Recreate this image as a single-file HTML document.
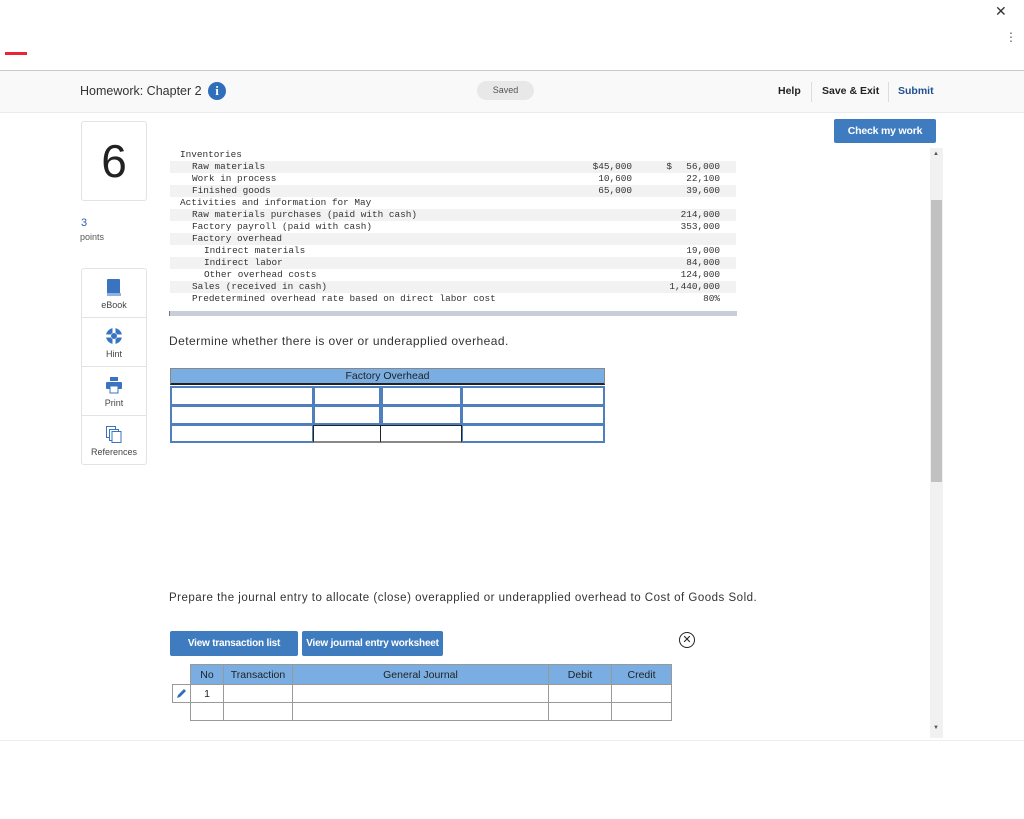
<!DOCTYPE html>
<html><head><style>
body{margin:0;width:1024px;height:819px;background:#fff;position:relative;overflow:hidden;font-family:"Liberation Sans",sans-serif;color:#333}
.a{position:absolute}
.mono{font-family:"Liberation Mono",monospace;font-size:9.4px;color:#333}
.r{position:absolute;left:170px;width:566px;height:12px;line-height:12px}
.s{background:#f2f2f2}
.n{position:absolute;text-align:right}
.side{position:absolute;left:81px;width:64px;border:1px solid #e3e3e3;border-radius:3px;background:#fff}
.si{height:48px;border-bottom:1px solid #e3e3e3;text-align:center;font-size:9px;color:#444;position:relative}
.si:last-child{border-bottom:none}
.si svg{position:absolute;left:23px;top:9px}
.si span{position:absolute;left:0;right:0;top:31px}
.btn{position:absolute;background:#3f7cbf;color:#fff;font-weight:bold;font-size:10px;text-align:center;border-radius:2px;letter-spacing:-0.2px}
table{border-collapse:collapse;table-layout:fixed}
td,th{border:1px solid #999;padding:0;font-weight:normal}
</style></head><body>
<div class="a" style="left:0;top:70px;width:1024px;height:1px;background:#c8c8c8"></div>
<div class="a" style="left:995px;top:3px;font-size:14px;color:#333">✕</div>
<div class="a" style="left:1005px;top:30px;font-size:12px;color:#555">⋮</div>
<div class="a" style="left:5px;top:52px;width:22px;height:3px;background:#e23"></div>
<div class="a" style="left:0;top:71px;width:1024px;height:41px;background:#f9f9f9;border-bottom:1px solid #ececec"></div>
<div class="a" style="left:80px;top:84px;font-size:12.5px;color:#333">Homework: Chapter 2</div>
<div class="a" style="left:208px;top:82px;width:18px;height:18px;border-radius:50%;background:#2f6fba;color:#fff;font-weight:bold;font-size:13px;text-align:center;line-height:18px;font-family:'Liberation Serif',serif">i</div>
<div class="a" style="left:477px;top:81px;width:57px;height:19px;border-radius:10px;background:#e8e8e8;font-size:9px;text-align:center;line-height:19px;color:#555">Saved</div>
<div class="a" style="left:778px;top:85px;font-size:10.5px;font-weight:bold;color:#222">Help</div>
<div class="a" style="left:811px;top:82px;width:1px;height:20px;background:#ddd"></div>
<div class="a" style="left:822px;top:85px;font-size:10.5px;font-weight:bold;color:#222">Save &amp; Exit</div>
<div class="a" style="left:888px;top:82px;width:1px;height:20px;background:#ddd"></div>
<div class="a" style="left:898px;top:85px;font-size:10.5px;font-weight:bold;color:#1f4f8f">Submit</div>
<div class="btn" style="left:834px;top:119px;width:102px;height:24px;line-height:24px;font-size:10.5px">Check my work</div>
<div class="a" style="left:930px;top:148px;width:13px;height:590px;background:#f1f1f1"></div>
<div class="a" style="left:931px;top:200px;width:11px;height:282px;background:#c1c1c1"></div>
<div class="a" style="left:933px;top:151px;font-size:6px;color:#555">▲</div>
<div class="a" style="left:933px;top:725px;font-size:6px;color:#555">▼</div>
<div class="a" style="left:81px;top:121px;width:64px;height:78px;border:1px solid #e3e3e3;border-radius:3px;text-align:center;font-size:46px;line-height:78px;color:#222">6</div>
<div class="a" style="left:81px;top:217px;font-size:11px;color:#2f5f9f">3</div>
<div class="a" style="left:80px;top:232px;font-size:9px;color:#555">points</div>
<div class="side" style="top:268px">
<div class="si"><svg width="17" height="19"><rect x="2" y="1" width="13" height="16" rx="1" fill="#3a74c0"/><rect x="2" y="15" width="14" height="3" fill="#8fb3e0"/></svg><span>eBook</span></div>
<div class="si"><svg width="18" height="18"><circle cx="9" cy="9" r="8" fill="#3a74c0"/><circle cx="9" cy="9" r="3.5" fill="#fff"/><rect x="7.5" y="1" width="3" height="16" fill="#fff"/><rect x="1" y="7.5" width="16" height="3" fill="#fff"/><circle cx="9" cy="9" r="3" fill="#3a74c0"/></svg><span>Hint</span></div>
<div class="si"><svg width="18" height="18"><rect x="5" y="1" width="8" height="4" fill="#3a74c0"/><rect x="1" y="6" width="16" height="7" rx="1" fill="#3a74c0"/><rect x="5" y="10" width="8" height="7" fill="#fff" stroke="#3a74c0"/></svg><span>Print</span></div>
<div class="si"><svg width="18" height="18"><rect x="1.5" y="1.5" width="9" height="11" fill="#fff" stroke="#3a74c0"/><rect x="4.5" y="4.5" width="9" height="11" fill="#fff" stroke="#3a74c0"/><rect x="7" y="6.5" width="9" height="11" fill="#fff" stroke="#3a74c0"/></svg><span>References</span></div>
</div>
<div class="mono">
<div class="r" style="top:149px"><span style="margin-left:10px">Inventories</span></div>
<div class="r s" style="top:161px"><span style="margin-left:22px">Raw materials</span><span class="n" style="right:104px">$45,000</span><span class="n" style="right:64px">$</span><span class="n" style="right:16px">56,000</span></div>
<div class="r" style="top:173px"><span style="margin-left:22px">Work in process</span><span class="n" style="right:104px">10,600</span><span class="n" style="right:16px">22,100</span></div>
<div class="r s" style="top:185px"><span style="margin-left:22px">Finished goods</span><span class="n" style="right:104px">65,000</span><span class="n" style="right:16px">39,600</span></div>
<div class="r" style="top:197px"><span style="margin-left:10px">Activities and information for May</span></div>
<div class="r s" style="top:209px"><span style="margin-left:22px">Raw materials purchases (paid with cash)</span><span class="n" style="right:16px">214,000</span></div>
<div class="r" style="top:221px"><span style="margin-left:22px">Factory payroll (paid with cash)</span><span class="n" style="right:16px">353,000</span></div>
<div class="r s" style="top:233px"><span style="margin-left:22px">Factory overhead</span></div>
<div class="r" style="top:245px"><span style="margin-left:34px">Indirect materials</span><span class="n" style="right:16px">19,000</span></div>
<div class="r s" style="top:257px"><span style="margin-left:34px">Indirect labor</span><span class="n" style="right:16px">84,000</span></div>
<div class="r" style="top:269px"><span style="margin-left:34px">Other overhead costs</span><span class="n" style="right:16px">124,000</span></div>
<div class="r s" style="top:281px"><span style="margin-left:22px">Sales (received in cash)</span><span class="n" style="right:16px">1,440,000</span></div>
<div class="r" style="top:293px"><span style="margin-left:22px">Predetermined overhead rate based on direct labor cost</span><span class="n" style="right:16px">80%</span></div>
</div>
<div class="a" style="left:169px;top:311px;width:567px;height:5px;background:#c9cdd8;border-left:1px solid #777"></div>
<div class="a" style="left:169px;top:334px;font-size:12px;letter-spacing:0.45px;color:#333">Determine whether there is over or underapplied overhead.</div>
<div class="a" style="left:170px;top:368px;width:435px;height:17px;background:#7aaee3;border:1px solid #888;border-bottom:2px solid #222;box-sizing:border-box;text-align:center;font-size:10.5px;line-height:15px;color:#222">Factory Overhead</div>
<div class="a" style="left:170px;top:386px;width:435px;height:57px;background:#4f7fbf"></div>
<div class="a" style="left:172px;top:388px;width:140px;height:16px;background:#fff"></div>
<div class="a" style="left:315px;top:388px;width:64px;height:16px;background:#fff"></div>
<div class="a" style="left:383px;top:388px;width:77px;height:16px;background:#fff"></div>
<div class="a" style="left:463px;top:388px;width:140px;height:16px;background:#fff"></div>
<div class="a" style="left:172px;top:407px;width:140px;height:16px;background:#fff"></div>
<div class="a" style="left:315px;top:407px;width:64px;height:16px;background:#fff"></div>
<div class="a" style="left:383px;top:407px;width:77px;height:16px;background:#fff"></div>
<div class="a" style="left:463px;top:407px;width:140px;height:16px;background:#fff"></div>
<div class="a" style="left:172px;top:426px;width:140px;height:15px;background:#fff"></div>
<div class="a" style="left:313px;top:425px;width:68px;height:18px;background:#fff;border:1px solid #222;box-sizing:border-box;border-bottom:2px solid #888"></div>
<div class="a" style="left:381px;top:425px;width:81px;height:18px;background:#fff;border:1px solid #222;box-sizing:border-box;border-left:none;border-bottom:2px solid #888"></div>
<div class="a" style="left:463px;top:426px;width:140px;height:15px;background:#fff"></div>
<div class="a" style="left:169px;top:592px;font-size:11.5px;letter-spacing:0.5px;color:#333">Prepare the journal entry to allocate (close) overapplied or underapplied overhead to Cost of Goods Sold.</div>
<div class="btn" style="left:170px;top:631px;width:128px;height:25px;line-height:25px">View transaction list</div>
<div class="btn" style="left:302px;top:631px;width:141px;height:25px;line-height:25px">View journal entry worksheet</div>
<div class="a" style="left:679px;top:632px;width:14px;height:14px;border:1.5px solid #222;border-radius:50%;text-align:center;font-size:11px;line-height:14px;color:#222">✕</div>
<table class="a" style="left:190px;top:664px;width:482px;font-size:10.5px;color:#222">
<tr style="background:#7aaee3;height:20px"><th style="width:32px">No</th><th style="width:68px">Transaction</th><th style="width:255px">General Journal</th><th style="width:62px">Debit</th><th>Credit</th></tr>
<tr style="height:18px"><td style="text-align:center">1</td><td></td><td></td><td></td><td></td></tr>
<tr style="height:18px"><td></td><td></td><td></td><td></td><td></td></tr>
</table>
<div class="a" style="left:172px;top:684px;width:18px;height:19px;border:1px solid #999;border-right:none;box-sizing:border-box"><svg width="17" height="17"><path d="M4 13 L5 10 L11 4 L13 6 L7 12 Z" fill="#2f6fba"/></svg></div>
<div class="a" style="left:0;top:740px;width:1024px;height:1px;background:#eee"></div>
</body></html>
